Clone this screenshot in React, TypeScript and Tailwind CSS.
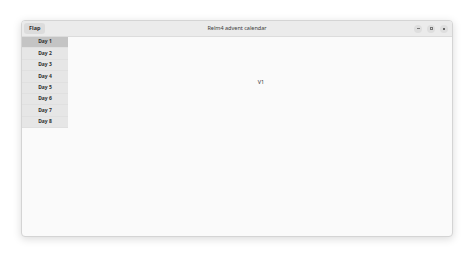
const days = ["Day 1", "Day 2", "Day 3", "Day 4", "Day 5", "Day 6", "Day 7", "Day 8"];

export default function App() {
  return (
    <div
      className="w-[474px] h-[260px] bg-white pt-[20px] pl-[21px]"
      style={{ fontFamily: '"Noto Sans", "Open Sans", sans-serif' }}
    >
      <div className="w-[432px] h-[217px] flex flex-col rounded-[4px] border border-[#d4d4d4] bg-[#fafafa] shadow-[0_2px_8px_rgba(0,0,0,0.15)] overflow-hidden">
        <div className="h-[16px] flex items-center bg-[#ebebeb] border-b border-[#dcdcdc] relative">
          <div className="ml-[2px] h-[11px] px-[5px] flex items-center rounded-[3px] bg-[#dcdcdc] text-[5.5px] font-bold text-[#2e2e2e] leading-none">
            Flap
          </div>
          <div className="absolute inset-0 flex items-center justify-center text-[5.5px] text-[#3a3a3a] pointer-events-none">
            Relm4 advent calendar
          </div>
          <div className="ml-auto mr-[4px] flex items-center gap-[5px]">
            <span className="w-[8px] h-[8px] rounded-full bg-[#dedede] flex items-center justify-center">
              <span className="w-[3px] h-[1px] bg-[#777]" />
            </span>
            <span className="w-[8px] h-[8px] rounded-full bg-[#dedede] flex items-center justify-center">
              <span className="w-[3px] h-[3px] border border-[#777]" />
            </span>
            <span className="w-[8px] h-[8px] rounded-full bg-[#dedede] flex items-center justify-center">
              <span className="w-[2px] h-[2px] bg-[#666]" />
            </span>
          </div>
        </div>
        <div className="flex flex-1">
          <div className="w-[46px] flex flex-col self-start bg-[#e6e6e6]">
            {days.map((d, i) => (
              <div
                key={d}
                className={`h-[11.4px] flex items-center justify-center text-[5px] font-bold text-[#2e2e2e] border-b border-[#e0e0e0] ${
                  i === 0 ? "bg-[#c4c4c4]" : ""
                }`}
              >
                {d}
              </div>
            ))}
          </div>
          <div className="flex-1 flex justify-center pt-[43px] pl-[2px]">
            <span className="text-[5.5px] text-[#333] leading-none h-fit">V1</span>
          </div>
        </div>
      </div>
    </div>
  );
}
